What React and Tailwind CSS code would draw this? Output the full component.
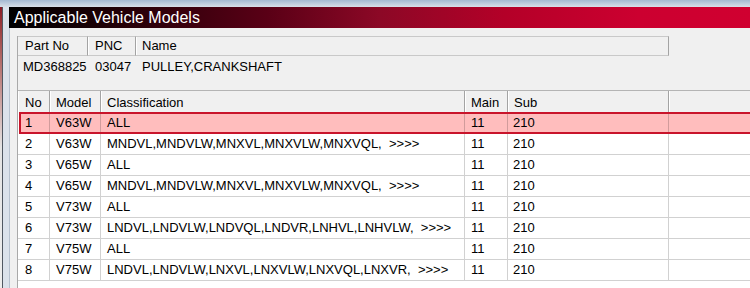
import React from "react";

const rows = [
  ["1", "V63W", "ALL"],
  ["2", "V63W", "MNDVL,MNDVLW,MNXVL,MNXVLW,MNXVQL,  >>>>"],
  ["3", "V65W", "ALL"],
  ["4", "V65W", "MNDVL,MNDVLW,MNXVL,MNXVLW,MNXVQL,  >>>>"],
  ["5", "V73W", "ALL"],
  ["6", "V73W", "LNDVL,LNDVLW,LNDVQL,LNDVR,LNHVL,LNHVLW,  >>>>"],
  ["7", "V75W", "ALL"],
  ["8", "V75W", "LNDVL,LNDVLW,LNXVL,LNXVLW,LNXVQL,LNXVR,  >>>>"],
];

function HeadCell({ w, children }) {
  return (
    <div
      className={`${w} shrink-0 h-full flex items-center pl-[6px] pt-[2px] border-r border-[#a3a3a3] shadow-[inset_1px_0_0_#ffffff] whitespace-pre`}
    >
      {children}
    </div>
  );
}

function Row({ r, selected }) {
  const line = "border-r border-black/[0.18]";
  return (
    <div
      className={
        selected
          ? "h-[22px] shrink-0 flex ml-[1px] border-y-2 border-l-2 border-[#c9142b] bg-[#ffbdbd]"
          : "h-[21px] shrink-0 flex border-b border-black/[0.18]"
      }
    >
      <div className={`${selected ? "w-[29px] pl-[4px]" : "w-[32px] pl-[7px]"} shrink-0 flex items-center ${line}`}>{r[0]}</div>
      <div className={`w-[51px] shrink-0 flex items-center pl-[6px] ${line}`}>{r[1]}</div>
      <div className={`w-[364px] shrink-0 flex items-center pl-[6px] whitespace-pre ${line}`}>{r[2]}</div>
      <div className={`w-[43px] shrink-0 flex items-center pl-[6px] ${line}`}>11</div>
      <div className={`w-[161px] shrink-0 flex items-center pl-[5px] ${line}`}>210</div>
      <div className="flex-1" />
    </div>
  );
}

export default function App() {
  return (
    <div className="w-[750px] h-[288px] overflow-hidden flex flex-col bg-[#dce3ec] text-black text-[13px] font-['Liberation_Sans',Arial,sans-serif]">
      <div className="h-[7px] shrink-0 bg-linear-to-b from-[#a4b9d1] to-[#d8dfe8]" />
      <div className="flex-1 flex min-h-0">
        <div className="w-[9px] shrink-0 flex">
          <div className="w-[2px] bg-linear-to-b from-[#8a1a26] via-[#e4e4e4] to-[#eeeeee]" />
          <div className="w-[1px] bg-[#505862]" />
          <div className="w-[6px] bg-[#dbe2eb]" />
        </div>
        <div className="flex-1 flex flex-col min-w-0">
          <div className="h-[21px] shrink-0 pl-[5px] flex items-center text-[16px] text-white bg-[linear-gradient(to_right,#000000_0%,#1a0005_12%,#5a0016_35%,#8c0826_50%,#b40028_67%,#cc0030_85%,#d00030_100%)]">
            Applicable Vehicle Models
          </div>
          <div className="flex-1 min-h-0 bg-[#f0f0f0] border-l border-[#b6c1ce] pl-[7px] pt-[8px] flex flex-col">
            <div className="flex-1 min-h-0 border-l border-[#a9a9a9] flex flex-col">
              {/* info header */}
              <div className="h-[20px] shrink-0 flex">
                <div className="w-[70px] shrink-0 border-y border-r border-y-[#c9c9c9] border-r-[#a3a3a3] flex items-center pl-[7px]">Part No</div>
                <div className="w-[48px] shrink-0 border-y border-r border-y-[#c9c9c9] border-r-[#a3a3a3] shadow-[inset_1px_0_0_#ffffff] flex items-center pl-[7px]">PNC</div>
                <div className="w-[533px] shrink-0 border-y border-r border-y-[#c9c9c9] border-r-[#a3a3a3] shadow-[inset_1px_0_0_#ffffff] flex items-center pl-[6px]">Name</div>
                <div className="flex-1" />
              </div>
              {/* info data */}
              <div className="h-[35px] shrink-0 border-b border-[#b4b4b4]">
                <div className="h-[22px] flex items-center">
                  <div className="w-[70px] shrink-0 pl-[5px]">MD368825</div>
                  <div className="w-[48px] shrink-0 pl-[7px]">03047</div>
                  <div className="pl-[6px]">PULLEY,CRANKSHAFT</div>
                </div>
              </div>
              {/* main table */}
              <div className="flex-1 min-h-0 bg-white flex flex-col">
                <div className="h-[21px] shrink-0 flex bg-[#f0f0f0]">
                  <HeadCell w="w-[32px]">
                    <span className="pl-[1px]">No</span>
                  </HeadCell>
                  <HeadCell w="w-[51px]">Model</HeadCell>
                  <HeadCell w="w-[364px]">Classification</HeadCell>
                  <HeadCell w="w-[43px]">Main</HeadCell>
                  <HeadCell w="w-[161px]">Sub</HeadCell>
                  <div className="flex-1 shadow-[inset_1px_0_0_#ffffff]" />
                </div>
                {rows.map((r, i) => (
                  <Row key={r[0]} r={r} selected={i === 0} />
                ))}
              </div>
            </div>
          </div>
        </div>
      </div>
    </div>
  );
}
